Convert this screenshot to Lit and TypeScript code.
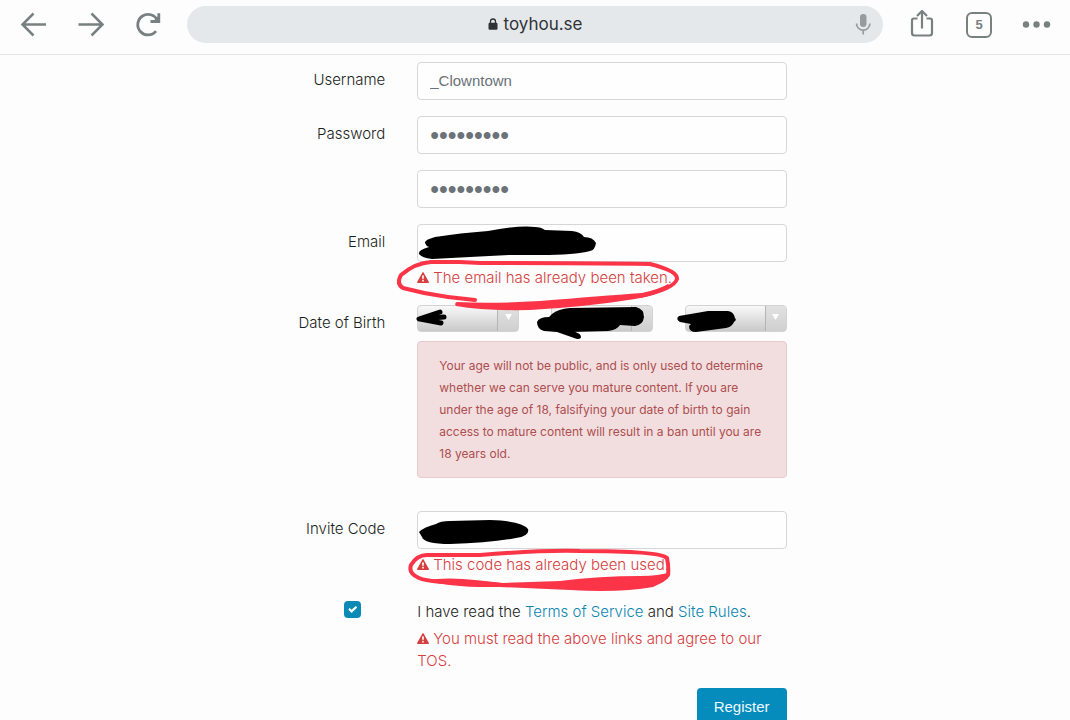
import { LitElement, html, css, svg } from "lit";
import { customElement } from "lit/decorators.js";

const warning = html`<svg class="warn" viewBox="0 0 12 11" width="12" height="11" aria-hidden="true">
  <path fill="currentColor" fill-rule="evenodd" d="M5.400.4Q6-.3 6.600.4L11.900 10Q12.100 11 11.300 11H.7Q-.1 11 .1 10ZM5 3.400 5.400 7.200H6.600L7 3.400ZM5.200 8V9.600H6.800V8Z"/>
</svg>`;

const emailMarks = svg`
  <path fill="#000" d="M425 243Q424 240 435 237Q460 233 488 231Q520 225 535 227Q541 227 545 230L572 231Q581 232 584 237Q593 237 596 243Q595 250 590 251Q575 255 540 255L509 255L470 257L432 259Q422 258 419 254Q418 250 429 247Q426 246 425 243Z"/>
  <path fill="none" stroke="#fc3448" stroke-width="4" stroke-linecap="round" stroke-linejoin="round" d="M475 300L448 297Q425 294 403 288Q396 284 401 275Q415 263 431 262L460 262L480 263Q580 263 650 264Q678 271 677 279Q674 289 640 296"/>
  <path fill="#fc3448" d="M457 302Q490 304 540 301Q600 296 642 293Q660 289 668 284L672 287Q655 296 635 299Q585 307 530 310Q485 311 456 306Q454 303 457 302Z"/>`;

const dateMarks = svg`
  <g fill="none" stroke="#000" stroke-width="5" stroke-linecap="round" stroke-linejoin="round">
    <path d="M440 312L419 319L444 317M420 319L441 323M425 319L436 316"/>
    <path d="M552 327L578 336L560 327"/>
  </g>
  <path fill="#000" d="M552 314Q558 309 570 308L636 307Q644 309 644 317Q643 325 635 326L620 325Q617 330 608 331L570 332L580 335Q583 339 577 339L557 332L544 331Q537 329 537 322Q539 317 549 317Z"/>
  <path fill="#000" d="M679 316L708 311L728 311Q734 312 735 318Q737 320 734 322Q732 327 726 328L696 332Q689 332 689 326L691 324L680 322Q675 319 679 316Z"/>`;

const codeMarks = svg`
  <path fill="#000" d="M419 532Q424 527 436 524Q440 521 450 521L490 520Q522 521 528 529Q530 536 516 538Q490 543 450 544Q424 544 422 537Z"/>
  <path fill="none" stroke="#fc3448" stroke-width="4" stroke-linecap="round" stroke-linejoin="round" d="M500 585L480 583Q430 583 419 578Q408 573 411 565Q417 555 427 555L480 555Q540 550 580 551Q660 551 667 558Q669 568 668 575Q665 580 652 585"/>
  <path fill="#fc3448" d="M424 580Q450 577 475 580L503 583L560 581Q600 576 640 576Q660 576 670 572Q670 578 653 587Q620 593 570 590L500 587Q450 588 424 580Z"/>`;

@customElement("app-root")
export class AppRoot extends LitElement {
  static styles = css`
    * { box-sizing: border-box; }
    :host {
      display: flex;
      flex-direction: column;
      height: 100vh;
      background: #fdfdfd;
      color: #1c1f22;
      font: 300 15px/22px Inter, "Liberation Sans", sans-serif;
    }
    button { font: inherit; color: inherit; border: 0; background: none; padding: 0; cursor: pointer; }
    a { color: #0a86b2; text-decoration: none; }
    svg { display: block; }
    .bar {
      display: flex;
      flex: none;
      align-items: center;
      gap: 24px;
      padding: 6px 19px 11px;
      border-bottom: 1px solid #e3e4e6;
      color: #788080;
    }
    .tools { display: flex; gap: 27px; }
    .tool { width: 30px; height: 30px; display: grid; place-items: center; }
    .address {
      flex: 1;
      display: grid;
      grid-template-columns: 1fr auto 1fr;
      align-items: center;
      height: 37px;
      border-radius: 19px;
      padding: 0 11px 2px;
      background: #e5e8eb;
    }
    .site {
      grid-column: 2;
      display: flex;
      align-items: center;
      gap: 6px;
      font-size: 17px;
      font-weight: 400;
      color: #2f3337;
    }
    .mic { justify-self: end; color: #959b9e; }
    .count { font: 700 13px/22px "Liberation Sans", sans-serif; border: 2px solid; border-radius: 6px; width: 26px; height: 26px; }
    main { flex: 1; min-height: 0; overflow-y: auto; scrollbar-width: none; }
    form {
      display: grid;
      gap: 16px;
      width: 50%;
      min-width: 480px;
      margin: 0 auto;
      padding: 7px 0 16px;
    }
    .row { display: grid; grid-template-columns: 1fr 3fr; }
    .name { padding: 7px 16px 0; text-align: right; white-space: nowrap; }
    .field { position: relative; margin: 0 16px; min-width: 0; }
    .text {
      display: block;
      width: 100%;
      height: 38px;
      padding: 0 12px 2px;
      border: 1px solid #d5d7d9;
      border-radius: 4px;
      background: #fefefe;
      color: #6b7278;
      font: 15px "Liberation Sans", sans-serif;
    }
    .secret { padding-bottom: 0; font-size: 25px; }
    .error { margin: 5px 0 0; color: #d5403f; }
    .warn { display: inline-block; margin-right: 4px; }
    .marks { position: absolute; z-index: 1; left: -20px; top: -10px; pointer-events: none; }
    .dates { display: grid; grid-template-columns: repeat(3, 1fr); gap: 32px; }
    .date { position: relative; }
    .pick {
      display: block;
      appearance: none;
      width: 100%;
      height: 27px;
      padding: 0 24px 0 8px;
      border: 1px solid #d2d2d2;
      border-radius: 4px;
      background: linear-gradient(#f9f9f9, #c9c9c9);
      font: inherit;
    }
    .arrow {
      position: absolute;
      inset: 1px 1px 1px auto;
      width: 21px;
      display: grid;
      justify-content: center;
      padding-top: 8px;
      border-left: 1px solid #b5b5b5;
      border-radius: 0 3px 3px 0;
      background: linear-gradient(#e2e2e2, #cfcfcf);
      pointer-events: none;
    }
    .notice {
      margin: 9px 0 17px;
      padding: 13px 21px 12px;
      border: 1px solid #e8cbcd;
      border-radius: 4px;
      background: #f2dede;
      color: #ad4e50;
      font-size: 12px;
      font-weight: 400;
    }
    .agree { margin-top: 9px; }
    .tick { display: flex; justify-content: flex-end; align-items: start; padding-right: 40px; }
    .check {
      appearance: none;
      display: grid;
      place-items: center;
      width: 17px;
      height: 17px;
      margin: 0;
      border-radius: 4px;
      background: #c9ced2;
    }
    .check:checked { background: #0b8ab5; }
    .check:checked::after {
      content: "";
      width: 9px;
      height: 7px;
      background: #fff;
      clip-path: polygon(0 50%, 16% 30%, 37% 55%, 84% 0, 100% 20%, 37% 100%);
    }
    .send { display: flex; justify-content: flex-end; margin-right: 16px; }
    .submit {
      height: 38px;
      padding: 0 17px 2px;
      border-radius: 4px;
      background: #058cbc;
      color: #eef8fc;
      font: 15px "Liberation Sans", sans-serif;
    }
  `;

  private marks(y: number, shape: unknown) {
    return html`<svg class="marks" width="410" height="100" viewBox="397 ${y - 10} 410 100" aria-hidden="true">${shape}</svg>`;
  }

  private date(label: string) {
    return html`<div class="date">
      <select class="pick" aria-label=${label}><option></option></select>
      <span class="arrow"><svg width="9" height="8" viewBox="0 0 9 8"><path fill="#fff" d="M1 0H8L4.500 6Z"/></svg></span>
    </div>`;
  }

  render() {
    return html`
      <header class="bar">
        <nav class="tools">
          <button class="tool" aria-label="Back"><svg width="30" height="30" viewBox="0 1 30 30" fill="none" stroke="currentColor" stroke-width="2.500"><path d="M27 15.500H4M14.500 4.500 3.500 15.500 14.500 26.500"/></svg></button>
          <button class="tool" aria-label="Forward"><svg width="30" height="30" viewBox="0 1 30 30" fill="none" stroke="currentColor" stroke-width="2.500"><path d="M2.500 15.500H26M15.500 4.500 26.500 15.500 15.500 26.500"/></svg></button>
          <button class="tool" aria-label="Reload"><svg width="30" height="30" viewBox="0 1 30 30" fill="none" stroke="currentColor" stroke-width="2.800"><path d="M23 22.200A10.300 10.300 0 1 1 24.500 11.500"/><path d="M17.500 12.500H25.800V4.300"/><path fill="currentColor" stroke="none" d="M20 12.500 25.800 6.500V12.500Z"/></svg></button>
        </nav>
        <div class="address">
          <button class="site">
            <svg width="10" height="12" viewBox="0 0 10 12"><rect x=".5" y="4.800" width="9" height="7" rx="1.200" fill="currentColor"/><path d="M2.500 5.500V3.500a2.500 2.500 0 0 1 5 0V5.500" fill="none" stroke="currentColor" stroke-width="1.300"/></svg>
            <span>toyhou.se</span>
          </button>
          <button class="mic" aria-label="Voice search"><svg width="18" height="22" viewBox="0 0 18 22"><rect x="6" y="1" width="6.500" height="13" rx="3.200" fill="currentColor"/><path d="M2.500 10.500a6.700 6.700 0 0 0 13.400 0M9.200 17V21.500" fill="none" stroke="currentColor" stroke-width="1.700"/></svg></button>
        </div>
        <div class="tools">
          <button class="tool" aria-label="Share"><svg width="30" height="30" viewBox="0 2 30 30" fill="none" stroke="currentColor" stroke-width="2.200"><path d="M10.500 10.500H7Q5 10.500 5 12.500V25Q5 27.500 7.500 27.500H22.500Q25 27.500 25 25V12.500Q25 10.500 23 10.500H19.500M15 20.500V3.500M10 8 15 3 20 8"/></svg></button>
          <button class="tool" aria-label="Tabs"><span class="count">5</span></button>
          <button class="tool" aria-label="More"><svg width="30" height="30" viewBox="0 1 30 30" fill="currentColor"><circle cx="5" cy="15.500" r="3.200"/><circle cx="15.500" cy="15.500" r="3.200"/><circle cx="26" cy="15.500" r="3.200"/></svg></button>
        </div>
      </header>
      <main>
        <form @submit=${(e: Event) => e.preventDefault()}>
          <div class="row">
            <label class="name" for="user">Username</label>
            <div class="field"><input class="text" id="user" value="_Clowntown"></div>
          </div>
          <div class="row">
            <label class="name" for="pass">Password</label>
            <div class="field"><input class="text secret" id="pass" type="password" value="aaaaaaaaa"></div>
          </div>
          <div class="row">
            <span></span>
            <div class="field"><input class="text secret" type="password" aria-label="Repeat password" value="aaaaaaaaa"></div>
          </div>
          <div class="row">
            <label class="name" for="email">Email</label>
            <div class="field">
              <input class="text" id="email" type="email">
              <p class="error">${warning}The email has already been taken.</p>
              ${this.marks(224, emailMarks)}
            </div>
          </div>
          <div class="row">
            <span class="name">Date of Birth</span>
            <div class="field">
              <div class="dates">${this.date("Month")}${this.date("Day")}${this.date("Year")}</div>
              <div class="notice">Your age will not be public, and is only used to determine whether we can serve you mature content. If you are under the age of 18, falsifying your date of birth to gain access to mature content will result in a ban until you are 18 years old.</div>
              ${this.marks(305, dateMarks)}
            </div>
          </div>
          <div class="row">
            <label class="name" for="code">Invite Code</label>
            <div class="field">
              <input class="text" id="code">
              <p class="error">${warning}This code has already been used.</p>
              ${this.marks(511, codeMarks)}
            </div>
          </div>
          <div class="row agree">
            <div class="tick"><input class="check" id="agree" type="checkbox" checked></div>
            <div class="field">
              <label for="agree">I have read the <a href="#tos">Terms of Service</a> and <a href="#rules">Site Rules</a>.</label>
              <p class="error">${warning}You must read the above links and agree to our TOS.</p>
            </div>
          </div>
          <div class="send"><button class="submit" type="submit">Register</button></div>
        </form>
      </main>
    `;
  }
}
